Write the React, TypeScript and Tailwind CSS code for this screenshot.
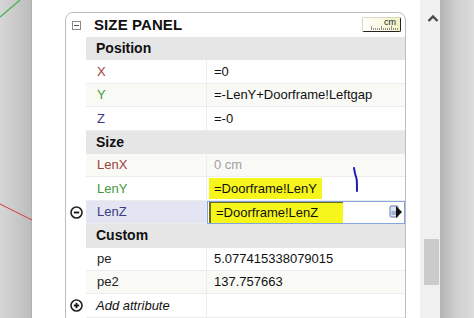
import React from 'react';

type Row =
  | { kind: 'section'; title: string }
  | { kind: 'attr'; label: string; color: string; value: string; valueClass?: string; mark?: 'leny' | 'lenz'; selected?: boolean }
  | { kind: 'add' };

const rows: Row[] = [
  { kind: 'section', title: 'Position' },
  { kind: 'attr', label: 'X', color: 'text-[#9c3f3a]', value: '=0' },
  { kind: 'attr', label: 'Y', color: 'text-[#3f9a3c]', value: '=-LenY+Doorframe!Leftgap' },
  { kind: 'attr', label: 'Z', color: 'text-[#3b3b86]', value: '=-0' },
  { kind: 'section', title: 'Size' },
  { kind: 'attr', label: 'LenX', color: 'text-[#9c3f3a]', value: '0 cm', valueClass: 'text-[#a0a0a0]' },
  { kind: 'attr', label: 'LenY', color: 'text-[#3f9a3c]', value: '=Doorframe!LenY', mark: 'leny' },
  { kind: 'attr', label: 'LenZ', color: 'text-[#3b3b86]', value: '=Doorframe!LenZ', mark: 'lenz', selected: true },
  { kind: 'section', title: 'Custom' },
  { kind: 'attr', label: 'pe', color: 'text-[#222]', value: '5.077415338079015' },
  { kind: 'attr', label: 'pe2', color: 'text-[#222]', value: '137.757663' },
  { kind: 'add' },
];

function CircleIcon({ plus }: { plus?: boolean }) {
  return (
    <svg width="13" height="13" viewBox="0 0 13 13">
      <circle cx="6.5" cy="6.5" r="5.5" fill="white" stroke="#222" strokeWidth="1.6" />
      <line x1="3.8" y1="6.5" x2="9.2" y2="6.5" stroke="#111" strokeWidth="1.8" />
      {plus && <line x1="6.5" y1="3.8" x2="6.5" y2="9.2" stroke="#111" strokeWidth="1.8" />}
    </svg>
  );
}

function UnitBadge() {
  return (
    <div className="relative w-[39px] h-[15px] rounded-[2px] border border-[#d8d8c0] border-r-[#222] border-b-[#222] bg-gradient-to-r from-white to-[#f3f2c2] overflow-hidden">
      <span className="absolute right-[4px] top-[-1px] text-[9px] leading-[11px] text-[#222]">cm</span>
      <svg className="absolute left-[8px] bottom-[1px]" width="28" height="4" viewBox="0 0 28 4">
        {Array.from({ length: 14 }).map((_, i) => (
          <line key={i} x1={i * 2 + 0.5} y1={i % 5 === 0 ? 0 : 2} x2={i * 2 + 0.5} y2="4" stroke="#777" strokeWidth="0.8" />
        ))}
      </svg>
    </div>
  );
}

export default function App() {
  let idx = -1;
  return (
    <div className="w-[474px] h-[318px] flex overflow-hidden bg-white" style={{ fontFamily: '"Liberation Sans", Arial, sans-serif' }}>
      {/* 3D viewport strip */}
      <div className="w-[32px] h-full shrink-0 bg-gradient-to-r from-[#d6d6d6] to-[#bdbdbd] border-r border-[#b0b0b0]">
        <svg width="32" height="318" viewBox="0 0 32 318">
          <line x1="0" y1="17" x2="20" y2="0" stroke="#3fb34a" strokeWidth="1.2" />
          <line x1="0" y1="204" x2="32" y2="220" stroke="#d23a3a" strokeWidth="1" />
        </svg>
      </div>

      {/* panel area */}
      <div className="w-[388px] shrink-0 h-full bg-white pl-[33px] pt-[12px] pr-[14px]">
        <div className="border border-[#bdbdbd] rounded-t-[8px] bg-white">
          <div className="h-[24px] flex items-center">
            <div className="w-[9px] h-[9px] ml-[6px] border border-[#8a8a8a] flex items-center justify-center">
              <div className="w-[5px] h-[1px] bg-[#555]" />
            </div>
            <span className="ml-[13px] text-[15px] font-bold text-[#111] tracking-[0.1px]">SIZE PANEL</span>
            <div className="ml-auto mr-[4px] mt-[-2px]">
              <UnitBadge />
            </div>
          </div>

          {rows.map((r, i) => {
            if (r.kind === 'section') {
              return (
                <div key={i} className="h-[23.4px] grid grid-cols-[20px_1fr]">
                  <div />
                  <div className="bg-[#e6e6e6] flex items-center pl-[10px] text-[14px] font-bold text-[#111]">{r.title}</div>
                </div>
              );
            }
            idx++;
            const cream = idx % 2 === 1;
            if (r.kind === 'add') {
              return (
                <div key={i} className="h-[23.4px] grid grid-cols-[20px_121px_1fr]">
                  <div className="flex items-center justify-center pl-[1px]">
                    <CircleIcon plus />
                  </div>
                  <div className="flex items-center pl-[10px] italic text-[13px] text-[#111] border-r border-[#e2e2e2] border-b border-[#ececec]">Add attribute</div>
                  <div className="border-b border-[#ececec]" />
                </div>
              );
            }
            const rowBg = r.selected ? '' : cream ? 'bg-[#f9f9f5]' : 'bg-white';
            return (
              <div key={i} className={`h-[23.4px] grid grid-cols-[20px_121px_1fr] ${rowBg}`}>
                <div className="flex items-center justify-center bg-white pl-[1px]">
                  {r.selected && <CircleIcon />}
                </div>
                <div className={`flex items-center pl-[11px] text-[13px] border-r border-[#e2e2e2] border-b border-[#ececec] ${r.color} ${r.selected ? 'bg-[#e3e5f3]' : ''}`}>
                  {r.label}
                </div>
                {r.mark === 'lenz' ? (
                  <div className="relative flex items-center pl-[1px] border border-[#83a6dc] bg-white">
                    <span className="w-[134px] h-[21px] flex items-center pl-[5px] bg-[#f6f51c] border-l-2 border-t border-[#6b6b1a] text-[13px] text-[#111]">
                      {r.value}
                    </span>
                    <svg className="ml-auto mr-[1px]" width="14" height="16" viewBox="0 0 14 16">
                      <rect x="1" y="2" width="8" height="11" rx="1" fill="#dfe6f2" stroke="#6a7ea6" strokeWidth="1" />
                      <rect x="2.5" y="7" width="5" height="4" fill="#9fb2d4" />
                      <path d="M7 2 L13 8 L7 14 Z" fill="#111" />
                    </svg>
                  </div>
                ) : r.mark === 'leny' ? (
                  <div className="relative flex items-center pl-[2px] border-b border-[#ececec]">
                    <span className="w-[113px] h-[21px] flex items-center pl-[5px] bg-[#f6f51c] text-[13px] text-[#111]">{r.value}</span>
                    <svg className="absolute left-[145px] top-[-10px]" width="8" height="26" viewBox="0 0 8 26">
                      <path d="M2 1 C2.6 6 3.6 9 4.6 12 C5.2 15 4.8 20 5 24" fill="none" stroke="#1c1cb4" strokeWidth="2" strokeLinecap="round" />
                    </svg>
                  </div>
                ) : (
                  <div className={`flex items-center pl-[7px] text-[13px] border-b border-[#ececec] ${r.valueClass ?? 'text-[#111]'}`}>{r.value}</div>
                )}
              </div>
            );
          })}
        </div>
      </div>

      {/* scrollbar */}
      <div className="w-[20px] shrink-0 h-full bg-[#f0f0f0] flex flex-col items-start">
        <svg className="mt-[14px] ml-[7px]" width="12" height="9" viewBox="0 0 12 9">
          <path d="M1.5 7 L6 2.5 L10.5 7" fill="none" stroke="#4a4a4a" strokeWidth="2.4" />
        </svg>
        <div className="mt-[216px] ml-[4px] w-[15px] h-[46px] bg-[#cbcbcb]" />
      </div>

      {/* right edge */}
      <div className="flex-1 h-full bg-gradient-to-r from-[#b4b4b4] via-[#d0d0d0] to-[#dcdcdc]" />
    </div>
  );
}
